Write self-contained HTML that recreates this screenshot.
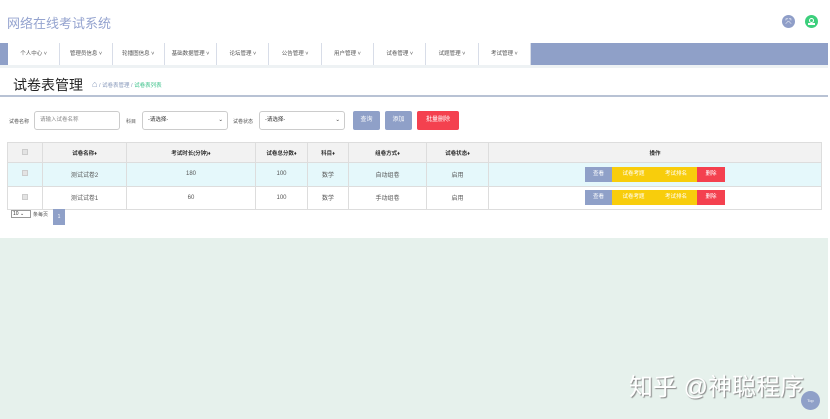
<!DOCTYPE html>
<html><head><meta charset="utf-8"><style>
*{margin:0;padding:0;box-sizing:border-box}
body{width:830px;height:419px;overflow:hidden;background:#fff;font-family:"Liberation Sans","Noto Sans CJK SC",sans-serif;position:relative;color:#333}
.abs{position:absolute}
.title{left:7px;top:13px;font-size:13px;color:#94a3cf}
.nav{left:0;top:43px;width:828px;height:22px;background:#8fa0c8}
.nav .w{position:absolute;left:8px;top:0;width:523px;height:22px;background:#fff;display:flex}
.nav .w div{width:52.3px;border-right:1px solid #d8dde8;font-size:5.5px;text-align:center;line-height:22px;color:#555}
.strip{left:0;top:65px;width:828px;height:3px;background:#eef2f4}
.ptitle{left:13px;top:75px;font-size:14px;color:#222}
.bc{left:92px;top:79px;font-size:5.5px;color:#8899bb}
.line{left:0;top:95px;width:828px;height:2px;background:#b8c2d4}
.lbl{font-size:5px;color:#555}
.inp{border:1px solid #ccc;border-radius:3px;height:19px;background:#fff;font-size:5.5px;line-height:17px;padding-left:5px;color:#888}
.btn{height:19px;border-radius:2px;color:#fff;font-size:6px;line-height:19px;text-align:center}
table{position:absolute;left:7px;top:142px;width:815px;border-collapse:collapse;font-size:6px}
td,th{border:1px solid #ddd;text-align:center;color:#555;font-weight:normal}
th{height:20px;background:#f2f2f2;color:#333;font-weight:bold;font-size:5.5px}
td{height:23.5px}
tr.h td{background:#e5f8fb}
.cb{display:inline-block;width:6px;height:6px;background:#e3e3e3;border:1px solid #ccc}
.ops{display:inline-flex;height:15px;font-size:5.5px;color:#fff;line-height:15px;vertical-align:middle}
.ops span{text-align:center}
.green{left:0;top:238px;width:828px;height:181px;background:#e6f1ec}
</style></head><body>
<div class="abs title">网络在线考试系统</div>
<div class="abs" style="left:782px;top:15px;width:13px;height:13px;border-radius:50%;background:#8f9ec8;color:#fff;font-size:8px;text-align:center;line-height:13px">⤧</div>
<div class="abs" style="left:805px;top:15px;width:13px;height:13px;border-radius:50%;background:#3ccf7c"><div class="abs" style="left:4px;top:3px;width:5px;height:5px;border:1.2px solid #fff;border-radius:50%"></div><div class="abs" style="left:3px;top:8px;width:7px;height:2px;background:#fff"></div></div>
<div class="abs nav"><div class="w">
<div>个人中心 ˅</div><div>管理员信息 ˅</div><div>轮播图信息 ˅</div><div>基础数据管理 ˅</div><div>论坛管理 ˅</div><div>公告管理 ˅</div><div>用户管理 ˅</div><div>试卷管理 ˅</div><div>试题管理 ˅</div><div>考试管理 ˅</div>
</div></div>
<div class="abs strip"></div>
<div class="abs ptitle">试卷表管理</div>
<div class="abs bc"><span style="font-size:9px">⌂</span> / 试卷表管理 / <span style="color:#3cc18a">试卷表列表</span></div>
<div class="abs line"></div>
<div class="abs lbl" style="left:9px;top:118px">试卷名称</div>
<div class="abs inp" style="left:34px;top:111px;width:86px">请输入试卷名称</div>
<div class="abs lbl" style="left:126px;top:118px">科目</div>
<div class="abs inp" style="left:142px;top:111px;width:86px;color:#333">-请选择-<span style="float:right;margin-right:4px">⌄</span></div>
<div class="abs lbl" style="left:233px;top:118px">试卷状态</div>
<div class="abs inp" style="left:259px;top:111px;width:86px;color:#333">-请选择-<span style="float:right;margin-right:4px">⌄</span></div>
<div class="abs btn" style="left:353px;top:111px;width:27px;background:#8fa0c8">查询</div>
<div class="abs btn" style="left:385px;top:111px;width:27px;background:#8fa0c8">添加</div>
<div class="abs btn" style="left:417px;top:111px;width:42px;background:#f4414f">批量删除</div>
<table>
<tr><th style="width:35px"><span class="cb"></span></th><th style="width:84px">试卷名称♦</th><th style="width:129px">考试时长(分钟)♦</th><th style="width:52px">试卷总分数♦</th><th style="width:41px">科目♦</th><th style="width:78px">组卷方式♦</th><th style="width:62px">试卷状态♦</th><th>操作</th></tr>
<tr class="h"><td><span class="cb"></span></td><td>测试试卷2</td><td>180</td><td>100</td><td>数学</td><td>自动组卷</td><td>启用</td><td><div class="ops"><span style="background:#8fa0c8;width:27px">查看</span><span style="background:#f8cd0c;width:43px">试卷考题</span><span style="background:#f8cd0c;width:42px">考试排名</span><span style="background:#f4414f;width:28px">删除</span></div></td></tr>
<tr><td><span class="cb"></span></td><td>测试试卷1</td><td>60</td><td>100</td><td>数学</td><td>手动组卷</td><td>启用</td><td><div class="ops"><span style="background:#8fa0c8;width:27px">查看</span><span style="background:#f8cd0c;width:43px">试卷考题</span><span style="background:#f8cd0c;width:42px">考试排名</span><span style="background:#f4414f;width:28px">删除</span></div></td></tr>
</table>
<div class="abs" style="left:11px;top:210px;width:20px;height:8px;border:1px solid #999;font-size:5px;line-height:6px;padding-left:1px">10 ⌄</div>
<div class="abs" style="left:33px;top:211px;font-size:5px;color:#555">条每页</div>
<div class="abs" style="left:53px;top:209px;width:12px;height:16px;background:#8fa0c8;color:#fff;font-size:5px;text-align:center;line-height:16px">1</div>
<div class="abs green"></div>
<div class="abs" style="left:629px;top:367px;font-size:24px;color:#fff;text-shadow:1px 1px 1px #888">知乎 @神聪程序</div>
<div class="abs" style="left:801px;top:391px;width:19px;height:19px;border-radius:50%;background:#8fa0c8;color:#fff;font-size:4px;text-align:center;line-height:19px">Top</div>
</body></html>
